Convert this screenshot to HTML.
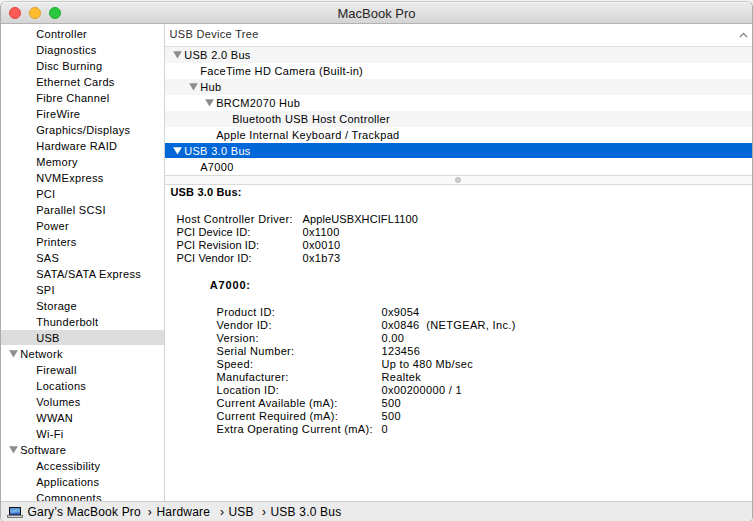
<!DOCTYPE html>
<html><head><meta charset="utf-8">
<style>
*{margin:0;padding:0;box-sizing:border-box}
html,body{width:753px;height:521px;overflow:hidden;background:#f2f2f2}
body{position:relative;font-family:"Liberation Sans",sans-serif;font-size:11px;color:#000}
.a{position:absolute;white-space:nowrap}
#win{position:absolute;left:0;top:1px;width:753px;height:521px;border:1px solid #ababab;border-top-color:#c9c9c9;border-radius:6px 6px 5px 5px;background:#fff;overflow:hidden}
#title{position:absolute;left:0;top:0;width:751px;height:22px;background:linear-gradient(#ececec,#d5d5d5);border-bottom:1px solid #b3b3b3;box-shadow:inset 0 1px 0 rgba(255,255,255,0.55)}
.tl{position:absolute;top:5px;width:12px;height:12px;border-radius:50%}
#side{position:absolute;left:0;top:22px;width:164px;height:478px;background:#fff;border-right:1px solid #d3d3d3;overflow:hidden}
.sr{position:absolute;white-space:nowrap;height:16px;line-height:16px;font-size:11px;letter-spacing:0.32px}
.tri{position:absolute;width:0;height:0;border-left:4.5px solid transparent;border-right:4.5px solid transparent;border-top:7px solid #8d8d8d}
#pane{position:absolute;left:164px;top:22px;width:587px;height:478px;background:#fff;overflow:hidden}
.dl{position:absolute;white-space:nowrap;line-height:13px;height:13px;letter-spacing:0.33px}
#status{position:absolute;left:0;top:499px;width:751px;height:22px;background:#ebebeb;border-top:1px solid #cfcfcf}

</style></head><body>
<div id="win">
  <div id="title">
    <div class="tl" style="left:8px;background:#fd5b55;border:1px solid #e04540"></div>
    <div class="tl" style="left:28px;background:#febd2f;border:1px solid #df9f25"></div>
    <div class="tl" style="left:48px;background:#28c83f;border:1px solid #1eab2e"></div>
    <div class="a" style="left:0;width:751px;text-align:center;top:4px;line-height:16px;font-size:13px;color:#262626;letter-spacing:0px">MacBook Pro</div>
  </div>
  <div id="side">
<div class="sr" style="top:2px;left:35.2px">Controller</div>
<div class="sr" style="top:18px;left:35.2px">Diagnostics</div>
<div class="sr" style="top:34px;left:35.2px">Disc Burning</div>
<div class="sr" style="top:50px;left:35.2px">Ethernet Cards</div>
<div class="sr" style="top:66px;left:35.2px">Fibre Channel</div>
<div class="sr" style="top:82px;left:35.2px">FireWire</div>
<div class="sr" style="top:98px;left:35.2px">Graphics/Displays</div>
<div class="sr" style="top:114px;left:35.2px">Hardware RAID</div>
<div class="sr" style="top:130px;left:35.2px">Memory</div>
<div class="sr" style="top:146px;left:35.2px">NVMExpress</div>
<div class="sr" style="top:162px;left:35.2px">PCI</div>
<div class="sr" style="top:178px;left:35.2px">Parallel SCSI</div>
<div class="sr" style="top:194px;left:35.2px">Power</div>
<div class="sr" style="top:210px;left:35.2px">Printers</div>
<div class="sr" style="top:226px;left:35.2px">SAS</div>
<div class="sr" style="top:242px;left:35.2px">SATA/SATA Express</div>
<div class="sr" style="top:258px;left:35.2px">SPI</div>
<div class="sr" style="top:274px;left:35.2px">Storage</div>
<div class="sr" style="top:290px;left:35.2px">Thunderbolt</div>
<div class="a" style="left:0;top:306px;width:163px;height:15px;background:#dcdcdc"></div>
<div class="sr" style="top:306px;left:35.2px">USB</div>
<svg class="a" style="left:8.2px;top:326px" width="9" height="8" viewBox="0 0 9 8"><path d="M0.1 0.3 L8.9 0.3 L4.5 7.5 Z" fill="#8d8d8d"/></svg>
<div class="sr" style="top:322px;left:19.2px">Network</div>
<div class="sr" style="top:338px;left:35.2px">Firewall</div>
<div class="sr" style="top:354px;left:35.2px">Locations</div>
<div class="sr" style="top:370px;left:35.2px">Volumes</div>
<div class="sr" style="top:386px;left:35.2px">WWAN</div>
<div class="sr" style="top:402px;left:35.2px">Wi-Fi</div>
<svg class="a" style="left:8.2px;top:422px" width="9" height="8" viewBox="0 0 9 8"><path d="M0.1 0.3 L8.9 0.3 L4.5 7.5 Z" fill="#8d8d8d"/></svg>
<div class="sr" style="top:418px;left:19.2px">Software</div>
<div class="sr" style="top:434px;left:35.2px">Accessibility</div>
<div class="sr" style="top:450px;left:35.2px">Applications</div>
<div class="sr" style="top:466px;left:35.2px">Components</div>
  </div>
  <div id="pane">
<div class="a" style="left:0;top:0;width:587px;height:23px;border-bottom:1px solid #dedede"></div>
<div class="sr" style="top:2px;left:4.5px;color:#2b2b2b">USB Device Tree</div>
<svg class="a" style="left:574px;top:8px" width="9" height="6" viewBox="0 0 9 6"><path d="M1 5 L4.5 1.5 L8 5" fill="none" stroke="#858585" stroke-width="1.3"/></svg>
<div class="a" style="left:0;top:23px;width:587px;height:16px;background:#f5f5f5"></div>
<svg class="a" style="left:8px;top:27px" width="9" height="8" viewBox="0 0 9 8"><path d="M0.1 0.3 L8.9 0.3 L4.5 7.5 Z" fill="#8d8d8d"/></svg>
<div class="sr" style="top:23px;left:19.2px;color:#000">USB 2.0 Bus</div>
<div class="sr" style="top:39px;left:35.2px;color:#000">FaceTime HD Camera (Built-in)</div>
<div class="a" style="left:0;top:55px;width:587px;height:16px;background:#f5f5f5"></div>
<svg class="a" style="left:24px;top:59px" width="9" height="8" viewBox="0 0 9 8"><path d="M0.1 0.3 L8.9 0.3 L4.5 7.5 Z" fill="#8d8d8d"/></svg>
<div class="sr" style="top:55px;left:35.2px;color:#000">Hub</div>
<svg class="a" style="left:40px;top:75px" width="9" height="8" viewBox="0 0 9 8"><path d="M0.1 0.3 L8.9 0.3 L4.5 7.5 Z" fill="#8d8d8d"/></svg>
<div class="sr" style="top:71px;left:51.2px;color:#000">BRCM2070 Hub</div>
<div class="a" style="left:0;top:87px;width:587px;height:16px;background:#f5f5f5"></div>
<div class="sr" style="top:87px;left:67.2px;color:#000">Bluetooth USB Host Controller</div>
<div class="sr" style="top:103px;left:51.2px;color:#000">Apple Internal Keyboard / Trackpad</div>
<div class="a" style="left:0;top:119px;width:587px;height:15px;background:#0067d8"></div>
<svg class="a" style="left:8px;top:123px" width="9" height="8" viewBox="0 0 9 8"><path d="M0.1 0.3 L8.9 0.3 L4.5 7.5 Z" fill="#fff"/></svg>
<div class="sr" style="top:119px;left:19.2px;color:#fff">USB 3.0 Bus</div>
<div class="sr" style="top:135px;left:35.2px;color:#000">A7000</div>
<div class="a" style="left:0;top:151px;width:587px;height:10px;border-top:1px solid #d9d9d9;border-bottom:1px solid #d9d9d9;background:#f9f9f9"></div>
<div class="a" style="left:290px;top:153px;width:6px;height:6px;border-radius:50%;background:#cfcfcf;border:0.5px solid #b8b8b8"></div>
<div class="dl" style="left:5.5px;top:162px;font-weight:bold;"><span style="letter-spacing:0.16px">USB 3.0 Bus:</span></div>
<div class="dl" style="left:11.5px;top:189px;">Host Controller Driver:</div>
<div class="dl" style="left:137.5px;top:189px;"><span style="letter-spacing:0.11px">AppleUSBXHCIFL1100</span></div>
<div class="dl" style="left:11.5px;top:202px;"><span style="letter-spacing:0.13px">PCI Device ID:</span></div>
<div class="dl" style="left:137.5px;top:202px;">0x1100</div>
<div class="dl" style="left:11.5px;top:215px;"><span style="letter-spacing:0.13px">PCI Revision ID:</span></div>
<div class="dl" style="left:137.5px;top:215px;">0x0010</div>
<div class="dl" style="left:11.5px;top:228px;"><span style="letter-spacing:0.13px">PCI Vendor ID:</span></div>
<div class="dl" style="left:137.5px;top:228px;">0x1b73</div>
<div class="dl" style="left:44.7px;top:255px;font-weight:bold;"><span style="letter-spacing:0.85px">A7000:</span></div>
<div class="dl" style="left:51.5px;top:282px;">Product ID:</div>
<div class="dl" style="left:216.5px;top:282px;">0x9054</div>
<div class="dl" style="left:51.5px;top:295px;">Vendor ID:</div>
<div class="dl" style="left:216.5px;top:295px;">0x0846&nbsp;&nbsp;(NETGEAR, Inc.)</div>
<div class="dl" style="left:51.5px;top:308px;">Version:</div>
<div class="dl" style="left:216.5px;top:308px;">0.00</div>
<div class="dl" style="left:51.5px;top:321px;">Serial Number:</div>
<div class="dl" style="left:216.5px;top:321px;">123456</div>
<div class="dl" style="left:51.5px;top:334px;">Speed:</div>
<div class="dl" style="left:216.5px;top:334px;">Up to 480 Mb/sec</div>
<div class="dl" style="left:51.5px;top:347px;">Manufacturer:</div>
<div class="dl" style="left:216.5px;top:347px;">Realtek</div>
<div class="dl" style="left:51.5px;top:360px;">Location ID:</div>
<div class="dl" style="left:216.5px;top:360px;">0x00200000 / 1</div>
<div class="dl" style="left:51.5px;top:373px;">Current Available (mA):</div>
<div class="dl" style="left:216.5px;top:373px;">500</div>
<div class="dl" style="left:51.5px;top:386px;">Current Required (mA):</div>
<div class="dl" style="left:216.5px;top:386px;">500</div>
<div class="dl" style="left:51.5px;top:399px;">Extra Operating Current (mA):</div>
<div class="dl" style="left:216.5px;top:399px;">0</div>
  </div>
  <div id="status">
<svg class="a" style="left:6px;top:4px" width="16" height="13" viewBox="0 0 16 13">
<defs><linearGradient id="scr" x1="0" y1="0" x2="0" y2="1"><stop offset="0" stop-color="#4f90dc"/><stop offset="0.5" stop-color="#6aaee0"/><stop offset="1" stop-color="#2448b8"/></linearGradient></defs>
<rect x="2" y="1" width="12" height="8.2" fill="#141414"/>
<rect x="3" y="2" width="10" height="6.6" fill="url(#scr)"/>
<path d="M4.5 7 L9 3 L11 3 L6.5 7Z" fill="#9fd0f0" opacity="0.5"/>
<rect x="0.5" y="9.4" width="15" height="2.1" fill="#d4d4d4" stroke="#6f6f6f" stroke-width="0.9"/>
</svg>
<div class="a" style="left:26.5px;top:2px;font-size:12px;line-height:16px;letter-spacing:0.2px">Gary’s MacBook Pro</div>
<div class="a" style="left:146.7px;top:2px;font-size:12px;line-height:16px;letter-spacing:0.2px">›</div>
<div class="a" style="left:155.5px;top:2px;font-size:12px;line-height:16px;letter-spacing:0.2px">Hardware</div>
<div class="a" style="left:219px;top:2px;font-size:12px;line-height:16px;letter-spacing:0.2px">›</div>
<div class="a" style="left:227.5px;top:2px;font-size:12px;line-height:16px;letter-spacing:0.2px">USB</div>
<div class="a" style="left:261px;top:2px;font-size:12px;line-height:16px;letter-spacing:0.2px">›</div>
<div class="a" style="left:269.5px;top:2px;font-size:12px;line-height:16px;letter-spacing:0.2px">USB 3.0 Bus</div>
  </div>
</div>
</body></html>
